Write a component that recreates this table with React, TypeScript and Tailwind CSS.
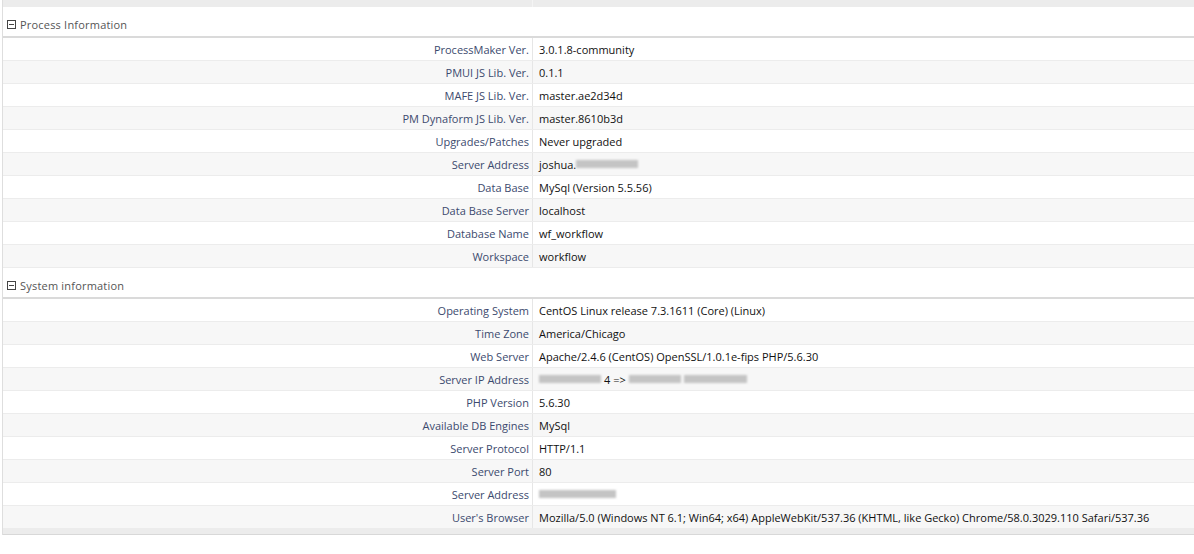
type Row = { label: string; value: React.ReactNode };

function Blur({ w }: { w: number }) {
  return (
    <span
      className="inline-block h-[8px] bg-[#c4c4c4] blur-[1px] align-middle"
      style={{ width: w }}
    />
  );
}

const processRows: Row[] = [
  { label: 'ProcessMaker Ver.', value: '3.0.1.8-community' },
  { label: 'PMUI JS Lib. Ver.', value: '0.1.1' },
  { label: 'MAFE JS Lib. Ver.', value: 'master.ae2d34d' },
  { label: 'PM Dynaform JS Lib. Ver.', value: 'master.8610b3d' },
  { label: 'Upgrades/Patches', value: 'Never upgraded' },
  {
    label: 'Server Address',
    value: (
      <span className="flex items-center">
        joshua.
        <Blur w={62} />
      </span>
    ),
  },
  { label: 'Data Base', value: 'MySql (Version 5.5.56)' },
  { label: 'Data Base Server', value: 'localhost' },
  { label: 'Database Name', value: 'wf_workflow' },
  { label: 'Workspace', value: 'workflow' },
];

const systemRows: Row[] = [
  { label: 'Operating System', value: 'CentOS Linux release 7.3.1611 (Core) (Linux)' },
  { label: 'Time Zone', value: 'America/Chicago' },
  { label: 'Web Server', value: 'Apache/2.4.6 (CentOS) OpenSSL/1.0.1e-fips PHP/5.6.30' },
  {
    label: 'Server IP Address',
    value: (
      <span className="flex items-center gap-[3px]">
        <Blur w={62} />
        <span>4 =&gt;</span>
        <Blur w={52} />
        <Blur w={63} />
      </span>
    ),
  },
  { label: 'PHP Version', value: '5.6.30' },
  { label: 'Available DB Engines', value: 'MySql' },
  { label: 'Server Protocol', value: 'HTTP/1.1' },
  { label: 'Server Port', value: '80' },
  {
    label: 'Server Address',
    value: (
      <span className="flex items-center">
        <Blur w={77} />
      </span>
    ),
  },
  {
    label: "User's Browser",
    value:
      'Mozilla/5.0 (Windows NT 6.1; Win64; x64) AppleWebKit/537.36 (KHTML, like Gecko) Chrome/58.0.3029.110 Safari/537.36',
  },
];

function SectionHeader({ title }: { title: string }) {
  return (
    <div className="flex h-[31px] items-center border-b-2 border-[#dadada] bg-white pt-[5px]">
      <span className="ml-[4px] mr-[4px] flex h-[9px] w-[9px] items-center justify-center border border-[#444]">
        <span className="h-px w-[5px] bg-[#444]" />
      </span>
      <span className="tracking-[0.2px] text-[#555]">{title}</span>
    </div>
  );
}

function InfoRows({ rows }: { rows: Row[] }) {
  return (
    <div>
      {rows.map((row, i) => (
        <div
          key={row.label + i}
          className={`flex h-[23px] border-b border-[#ececec] ${i % 2 ? 'bg-[#f7f7f7]' : 'bg-white'}`}
        >
          <div className="flex w-[530px] shrink-0 items-center justify-end border-r border-[#e6e6e6] pr-[3px] text-[#3c4a6e]">
            {row.label}
          </div>
          <div className="flex items-center whitespace-nowrap pl-[6px] text-[#111]">{row.value}</div>
        </div>
      ))}
    </div>
  );
}

export default function App() {
  return (
    <div className="min-h-[554px] bg-white font-['Open_Sans',sans-serif] text-[11px] leading-none">
      <div className="ml-[2px] border-l border-[#dedede]">
        <div className="flex h-[7px] bg-[#ececec]">
          <div className="w-[530px] border-r border-[#f4f4f4]" />
        </div>
        <SectionHeader title="Process Information" />
        <InfoRows rows={processRows} />
        <SectionHeader title="System information" />
        <InfoRows rows={systemRows} />
        <div className="h-[6px] border-b border-[#d8d8d8] bg-[#ececec]" />
      </div>
    </div>
  );
}
